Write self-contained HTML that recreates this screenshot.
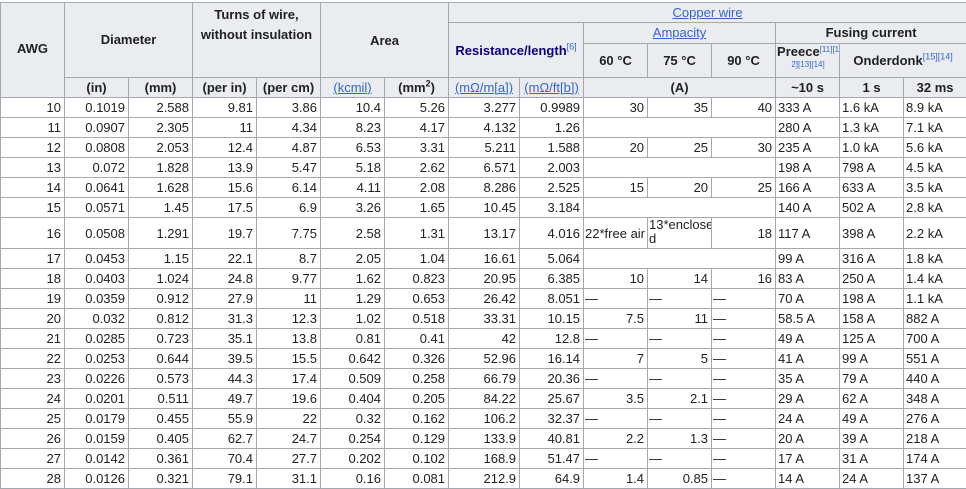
<!DOCTYPE html>
<html><head><meta charset="utf-8"><style>
html,body{margin:0;padding:0;background:#fff;width:966px;height:489px;overflow:hidden}
table{border-collapse:collapse;table-layout:fixed;font-family:"Liberation Sans",Arial,sans-serif;font-size:13px;color:#202122;position:absolute;top:2px;left:0;width:966px}
td,th{border:1px solid #a2a9b1;padding:0 3px;overflow:hidden;white-space:nowrap;line-height:15px}
th{background:#eaecf0;font-weight:bold;text-align:center}
td{text-align:right;height:19px}
td.l{text-align:left;padding-left:1px}
td.f{text-align:left;padding-left:2px}
a{color:#3366cc;text-decoration:underline;font-weight:normal}
a.v{color:#0b0080;text-decoration:none;font-weight:bold}
sup{font-size:9px;line-height:0;color:#3366cc;font-weight:normal}
tr.t td{height:30px}
.w{white-space:normal;text-align:left;line-height:14px;vertical-align:top;padding-left:1px}
.pr{display:block;height:32px;overflow:hidden;text-align:left;padding-left:1px;line-height:14px;white-space:nowrap}
.pr .s{font-size:8px;color:#3366cc;font-weight:normal;vertical-align:top;line-height:10px}
.pr .s2{display:block;font-size:8px;color:#3366cc;font-weight:normal;text-align:center;line-height:12px}
</style></head><body>
<table>
<colgroup><col style="width:64px"><col style="width:64px"><col style="width:64px"><col style="width:64px"><col style="width:64px"><col style="width:64px"><col style="width:64px"><col style="width:71px"><col style="width:64px"><col style="width:64px"><col style="width:64px"><col style="width:64px"><col style="width:64px"><col style="width:64px"><col style="width:63px"></colgroup>
<tr style="height:20px"><th rowspan="4" style="padding-bottom:4px">AWG</th><th rowspan="3" colspan="2" style="padding-bottom:2px">Diameter</th><th rowspan="3" colspan="2" style="vertical-align:top;padding-top:2px;line-height:20px">Turns of wire,<br>without insulation</th><th rowspan="3" colspan="2">Area</th><th colspan="8" style="font-weight:normal;line-height:16px;height:19px"><a>Copper wire</a></th></tr>
<tr style="height:21px"><th rowspan="2" colspan="2"><a class="v">Resistance/length</a><sup>[6]</sup></th><th colspan="3" style="line-height:16px;height:20px"><a>Ampacity</a></th><th colspan="3" style="line-height:16px">Fusing current</th></tr>
<tr style="height:34px"><th style="height:33px">60 °C</th><th>75 °C</th><th>90 °C</th><th style="padding:0"><span class="pr">Preece<span class="s">[11][1</span><span class="s2">2][13][14]</span></span></th><th colspan="2">Onderdonk<sup>[15][14]</sup></th></tr>
<tr style="height:20px"><th style="height:19px">(in)</th><th>(mm)</th><th>(per in)</th><th>(per cm)</th><th><a>(kcmil)</a></th><th>(mm<sup style="color:#202122;font-weight:bold">2</sup>)</th><th style="padding:0"><a>(mΩ/m[a])</a></th><th style="padding:0"><a>(mΩ/ft[b])</a></th><th colspan="3">(A)</th><th>~10 s</th><th>1 s</th><th>32 ms</th></tr>
<tr><td>10</td><td>0.1019</td><td>2.588</td><td>9.81</td><td>3.86</td><td>10.4</td><td>5.26</td><td>3.277</td><td>0.9989</td><td>30</td><td>35</td><td>40</td><td class="f">333 A</td><td class="f">1.6 kA</td><td class="f">8.9 kA</td></tr>
<tr><td>11</td><td>0.0907</td><td>2.305</td><td>11</td><td>4.34</td><td>8.23</td><td>4.17</td><td>4.132</td><td>1.26</td><td colspan="3"></td><td class="f">280 A</td><td class="f">1.3 kA</td><td class="f">7.1 kA</td></tr>
<tr><td>12</td><td>0.0808</td><td>2.053</td><td>12.4</td><td>4.87</td><td>6.53</td><td>3.31</td><td>5.211</td><td>1.588</td><td>20</td><td>25</td><td>30</td><td class="f">235 A</td><td class="f">1.0 kA</td><td class="f">5.6 kA</td></tr>
<tr><td>13</td><td>0.072</td><td>1.828</td><td>13.9</td><td>5.47</td><td>5.18</td><td>2.62</td><td>6.571</td><td>2.003</td><td colspan="3"></td><td class="f">198 A</td><td class="f">798 A</td><td class="f">4.5 kA</td></tr>
<tr><td>14</td><td>0.0641</td><td>1.628</td><td>15.6</td><td>6.14</td><td>4.11</td><td>2.08</td><td>8.286</td><td>2.525</td><td>15</td><td>20</td><td>25</td><td class="f">166 A</td><td class="f">633 A</td><td class="f">3.5 kA</td></tr>
<tr><td>15</td><td>0.0571</td><td>1.45</td><td>17.5</td><td>6.9</td><td>3.26</td><td>1.65</td><td>10.45</td><td>3.184</td><td colspan="3"></td><td class="f">140 A</td><td class="f">502 A</td><td class="f">2.8 kA</td></tr>
<tr class="t"><td>16</td><td>0.0508</td><td>1.291</td><td>19.7</td><td>7.75</td><td>2.58</td><td>1.31</td><td>13.17</td><td>4.016</td><td class="l">22*free air</td><td class="w">13*enclose d</td><td>18</td><td class="f">117 A</td><td class="f">398 A</td><td class="f">2.2 kA</td></tr>
<tr><td>17</td><td>0.0453</td><td>1.15</td><td>22.1</td><td>8.7</td><td>2.05</td><td>1.04</td><td>16.61</td><td>5.064</td><td colspan="3"></td><td class="f">99 A</td><td class="f">316 A</td><td class="f">1.8 kA</td></tr>
<tr><td>18</td><td>0.0403</td><td>1.024</td><td>24.8</td><td>9.77</td><td>1.62</td><td>0.823</td><td>20.95</td><td>6.385</td><td>10</td><td>14</td><td>16</td><td class="f">83 A</td><td class="f">250 A</td><td class="f">1.4 kA</td></tr>
<tr><td>19</td><td>0.0359</td><td>0.912</td><td>27.9</td><td>11</td><td>1.29</td><td>0.653</td><td>26.42</td><td>8.051</td><td class="l">—</td><td class="l">—</td><td class="l">—</td><td class="f">70 A</td><td class="f">198 A</td><td class="f">1.1 kA</td></tr>
<tr><td>20</td><td>0.032</td><td>0.812</td><td>31.3</td><td>12.3</td><td>1.02</td><td>0.518</td><td>33.31</td><td>10.15</td><td>7.5</td><td>11</td><td class="l">—</td><td class="f">58.5 A</td><td class="f">158 A</td><td class="f">882 A</td></tr>
<tr><td>21</td><td>0.0285</td><td>0.723</td><td>35.1</td><td>13.8</td><td>0.81</td><td>0.41</td><td>42</td><td>12.8</td><td class="l">—</td><td class="l">—</td><td class="l">—</td><td class="f">49 A</td><td class="f">125 A</td><td class="f">700 A</td></tr>
<tr><td>22</td><td>0.0253</td><td>0.644</td><td>39.5</td><td>15.5</td><td>0.642</td><td>0.326</td><td>52.96</td><td>16.14</td><td>7</td><td>5</td><td class="l">—</td><td class="f">41 A</td><td class="f">99 A</td><td class="f">551 A</td></tr>
<tr><td>23</td><td>0.0226</td><td>0.573</td><td>44.3</td><td>17.4</td><td>0.509</td><td>0.258</td><td>66.79</td><td>20.36</td><td class="l">—</td><td class="l">—</td><td class="l">—</td><td class="f">35 A</td><td class="f">79 A</td><td class="f">440 A</td></tr>
<tr><td>24</td><td>0.0201</td><td>0.511</td><td>49.7</td><td>19.6</td><td>0.404</td><td>0.205</td><td>84.22</td><td>25.67</td><td>3.5</td><td>2.1</td><td class="l">—</td><td class="f">29 A</td><td class="f">62 A</td><td class="f">348 A</td></tr>
<tr><td>25</td><td>0.0179</td><td>0.455</td><td>55.9</td><td>22</td><td>0.32</td><td>0.162</td><td>106.2</td><td>32.37</td><td class="l">—</td><td class="l">—</td><td class="l">—</td><td class="f">24 A</td><td class="f">49 A</td><td class="f">276 A</td></tr>
<tr><td>26</td><td>0.0159</td><td>0.405</td><td>62.7</td><td>24.7</td><td>0.254</td><td>0.129</td><td>133.9</td><td>40.81</td><td>2.2</td><td>1.3</td><td class="l">—</td><td class="f">20 A</td><td class="f">39 A</td><td class="f">218 A</td></tr>
<tr><td>27</td><td>0.0142</td><td>0.361</td><td>70.4</td><td>27.7</td><td>0.202</td><td>0.102</td><td>168.9</td><td>51.47</td><td class="l">—</td><td class="l">—</td><td class="l">—</td><td class="f">17 A</td><td class="f">31 A</td><td class="f">174 A</td></tr>
<tr><td>28</td><td>0.0126</td><td>0.321</td><td>79.1</td><td>31.1</td><td>0.16</td><td>0.081</td><td>212.9</td><td>64.9</td><td>1.4</td><td>0.85</td><td class="l">—</td><td class="f">14 A</td><td class="f">24 A</td><td class="f">137 A</td></tr>
</table>
</body></html>
